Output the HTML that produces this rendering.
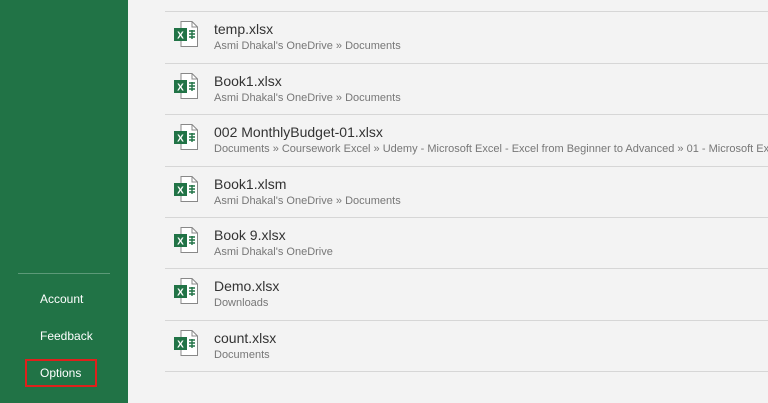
<!DOCTYPE html>
<html><head><style>
*{margin:0;padding:0;box-sizing:border-box}
body{width:768px;height:403px;overflow:hidden;background:#f3f3f3;font-family:"Liberation Sans",sans-serif;position:relative}
#side{position:absolute;left:0;top:0;width:128px;height:403px;background:#217346}
#side .sep{position:absolute;left:18px;top:273px;width:92px;height:1px;background:#5c9a78}
#side .it{position:absolute;left:40px;color:#fff;font-size:12px}
#box{position:absolute;left:25px;top:359px;width:72px;height:28px;border:2px solid #e0201c}
.line{position:absolute;left:165px;right:0;height:1px;background:#d6d6d6}
.row{position:absolute;left:0;width:768px}
.t{position:absolute;left:214px;font-size:14px;color:#333;white-space:nowrap}
.s{position:absolute;left:214px;font-size:11px;color:#777;white-space:nowrap}
svg{position:absolute;left:173px}
</style></head><body>
<div id="side"><div class="sep"></div>
<div class="it" style="top:292px">Account</div>
<div class="it" style="top:329px">Feedback</div>
<div class="it" style="top:366px">Options</div>
<div id="box"></div></div>

<div class="line" style="top:11px"></div>
<div class="line" style="top:63px"></div>
<div class="line" style="top:114px"></div>
<div class="line" style="top:166px"></div>
<div class="line" style="top:217px"></div>
<div class="line" style="top:268px"></div>
<div class="line" style="top:320px"></div>
<div class="line" style="top:371px"></div>

<svg width="0" height="0" style="position:absolute"><defs>
<symbol id="x" viewBox="0 0 26 28">
<path d="M8 1.5h11l5.5 5.5v19.5h-16.5z" fill="#fff" stroke="#888"/>
<path d="M19 1.5v5.5h5.5" fill="none" stroke="#888"/>
<rect x="1" y="8" width="13" height="13" fill="#217346"/>
<text x="7.5" y="18.5" font-size="10" font-weight="bold" fill="#fff" text-anchor="middle" font-family="Liberation Sans">X</text>
<path d="M16 11h6M16 14h6M16 17h6M19 10v9" stroke="#217346" stroke-width="1.4"/>
</symbol></defs></svg>

<svg width="26" height="28" style="top:20px"><use href="#x"/></svg>
<div class="t" style="top:21px">temp.xlsx</div><div class="s" style="top:40px">Asmi Dhakal's OneDrive » Documents</div>

<svg width="26" height="28" style="top:72px"><use href="#x"/></svg>
<div class="t" style="top:73px">Book1.xlsx</div><div class="s" style="top:92px">Asmi Dhakal's OneDrive » Documents</div>

<svg width="26" height="28" style="top:123px"><use href="#x"/></svg>
<div class="t" style="top:124px">002 MonthlyBudget-01.xlsx</div><div class="s" style="top:143px">Documents » Coursework Excel » Udemy - Microsoft Excel - Excel from Beginner to Advanced » 01 - Microsoft Excel</div>

<svg width="26" height="28" style="top:175px"><use href="#x"/></svg>
<div class="t" style="top:176px">Book1.xlsm</div><div class="s" style="top:195px">Asmi Dhakal's OneDrive » Documents</div>

<svg width="26" height="28" style="top:226px"><use href="#x"/></svg>
<div class="t" style="top:227px">Book 9.xlsx</div><div class="s" style="top:246px">Asmi Dhakal's OneDrive</div>

<svg width="26" height="28" style="top:277px"><use href="#x"/></svg>
<div class="t" style="top:278px">Demo.xlsx</div><div class="s" style="top:297px">Downloads</div>

<svg width="26" height="28" style="top:329px"><use href="#x"/></svg>
<div class="t" style="top:330px">count.xlsx</div><div class="s" style="top:349px">Documents</div>
</body></html>
